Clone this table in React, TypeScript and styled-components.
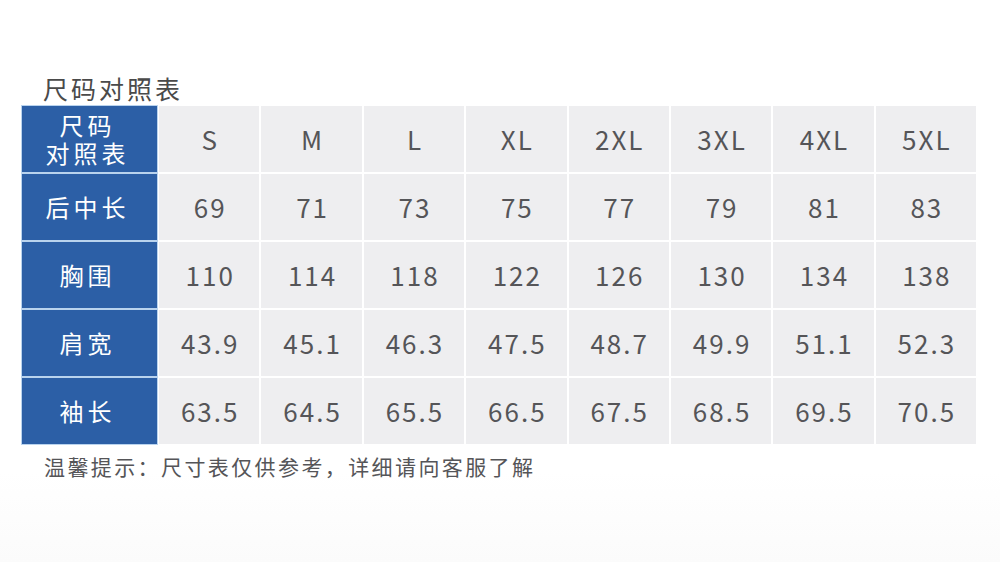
import React from 'react';
import styled, { createGlobalStyle } from 'styled-components';

const GlobalStyle = createGlobalStyle`
  html, body {
    margin: 0;
    padding: 0;
    background: #ffffff;
  }
  body {
    font-family: 'Noto Sans CJK SC', 'Noto Sans', sans-serif;
  }
`;

const Page = styled.div`
  width: 1000px;
  height: 562px;
  box-sizing: border-box;
  padding: 70px 24px 0 22px;
  background: linear-gradient(180deg, #ffffff 0%, #ffffff 84%, #fbfbfb 100%);
  display: flex;
  flex-direction: column;
  overflow: hidden;
`;

const Title = styled.div`
  margin-left: 21px;
  height: 36px;
  font-size: 25px;
  line-height: 36px;
  color: #4a4a4a;
  letter-spacing: 3px;
`;

const Table = styled.div`
  display: grid;
  grid-template-columns: 135px repeat(8, 1fr);
  grid-template-rows: repeat(5, 1fr);
  gap: 2px;
  width: 954px;
  height: 338px;
  background: #ffffff;
`;

const Cell = styled.div<{ head?: boolean }>`
  display: flex;
  flex-direction: column;
  align-items: center;
  justify-content: center;
  text-align: center;
  box-sizing: border-box;
  padding-left: ${(p) => (p.head ? '0' : '2px')};
  padding-right: ${(p) => (p.head ? '4px' : '0')};
  background: ${(p) => (p.head ? '#2c5fa6' : '#eeeef0')};
  color: ${(p) => (p.head ? '#ffffff' : '#555558')};
  font-size: ${(p) => (p.head ? '24px' : '26px')};
  line-height: 30px;
  letter-spacing: ${(p) => (p.head ? '4px' : '2px')};
  box-shadow: ${(p) => (p.head ? '0 0 0 1px #b9d3ee' : 'none')};
`;

const Line = styled.span`
  display: block;
  line-height: 28px;
`;

const Note = styled.div`
  margin-left: 22px;
  margin-top: 8px;
  font-size: 21px;
  line-height: 28px;
  color: #555558;
  letter-spacing: 2.4px;
`;

const sizes = ['S', 'M', 'L', 'XL', '2XL', '3XL', '4XL', '5XL'];

const rows: { name: string; values: string[] }[] = [
  { name: '后中长', values: ['69', '71', '73', '75', '77', '79', '81', '83'] },
  { name: '胸围', values: ['110', '114', '118', '122', '126', '130', '134', '138'] },
  { name: '肩宽', values: ['43.9', '45.1', '46.3', '47.5', '48.7', '49.9', '51.1', '52.3'] },
  { name: '袖长', values: ['63.5', '64.5', '65.5', '66.5', '67.5', '68.5', '69.5', '70.5'] },
];

function App() {
  return (
    <Page>
      <GlobalStyle />
      <Title>尺码对照表</Title>
      <Table>
        <Cell head>
          <Line>尺码</Line>
          <Line>对照表</Line>
        </Cell>
        {sizes.map((s) => (
          <Cell key={s}>{s}</Cell>
        ))}
        {rows.map((r) => (
          <React.Fragment key={r.name}>
            <Cell head>{r.name}</Cell>
            {r.values.map((v, i) => (
              <Cell key={i}>{v}</Cell>
            ))}
          </React.Fragment>
        ))}
      </Table>
      <Note>温馨提示：尺寸表仅供参考，详细请向客服了解</Note>
    </Page>
  );
}

export default App;
